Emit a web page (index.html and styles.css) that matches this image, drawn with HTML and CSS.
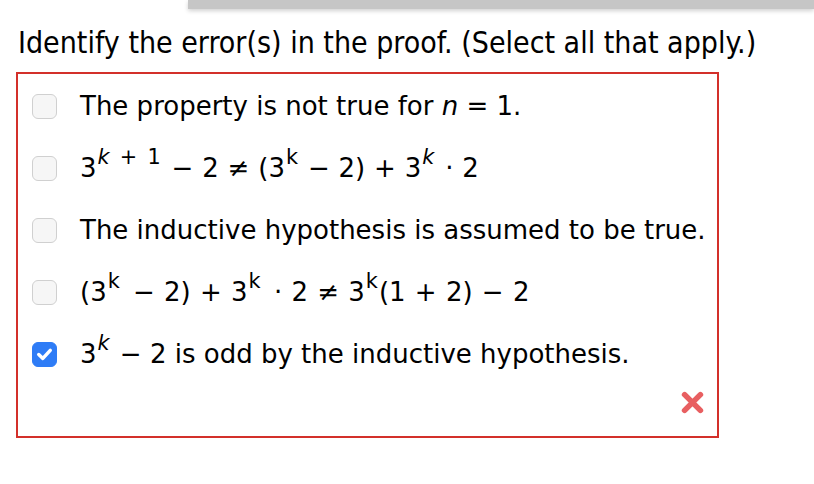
FILE: index.html
```html
<!DOCTYPE html>
<html>
<head>
<meta charset="utf-8">
<link rel="stylesheet" href="styles.css">
</head>
<body>
<div class="topbar"></div>
<p class="title">Identify the error(s) in the proof. (Select all that apply.)</p>
<div class="answer">
  <label class="row">
    <span class="box"></span>
    <span class="txt">The property is not true for <i>n</i> = 1.</span>
  </label>
  <label class="row">
    <span class="box"></span>
    <span class="txt eq-a">3<sup class="it"><i>k</i> <span class="op">+</span> 1</sup> &minus; 2 &ne; (3<sup class="tight">k</sup> &minus; 2) + 3<sup class="it"><i>k</i></sup> &middot; 2</span>
  </label>
  <label class="row">
    <span class="box"></span>
    <span class="txt">The inductive hypothesis is assumed to be true.</span>
  </label>
  <label class="row">
    <span class="box"></span>
    <span class="txt eq-b">(3<sup>k</sup> &minus; 2) + 3<sup>k</sup> &middot; 2 &ne; 3<sup class="tight">k</sup>(1 + 2) &minus; 2</span>
  </label>
  <label class="row">
    <span class="box checked"><svg viewBox="0 0 24 24" width="24" height="24"><path d="M6 12.5 L10.3 16.6 L18 8.2" fill="none" stroke="#fff" stroke-width="3.6" stroke-linecap="round" stroke-linejoin="round"/></svg></span>
    <span class="txt">3<sup class="it"><i>k</i></sup> &minus; 2 is odd by the inductive hypothesis.</span>
  </label>
  <div class="foot">
    <svg class="mark" viewBox="0 0 24 24" width="27" height="27"><path d="M5 5 L19 19 M19 5 L5 19" stroke="#e85f61" stroke-width="5" stroke-linecap="round"/></svg>
  </div>
</div>
</body>
</html>
```
FILE: styles.css
```css
html, body {
  margin: 0;
  padding: 0;
  background: #fff;
}
body {
  width: 814px;
  height: 484px;
  overflow: hidden;
  color: #000;
  font-family: "DejaVu Sans", Verdana, sans-serif;
}
.topbar {
  margin-left: 188px;
  height: 9px;
  background: #c6c6c6;
  box-shadow: 0 2px 4px rgba(0,0,0,0.18);
}
.title {
  margin: 16px 0 0 18px;
  font-family: "DejaVu Sans Condensed", "DejaVu Sans", sans-serif;
  font-size: 30px;
  line-height: 36px;
}
.answer {
  margin: 11px 0 0 16px;
  border: 2px solid #d3302a;
  box-sizing: content-box;
  padding: 12px 0 0 14px;
  width: 685px;
  height: 350px;
  display: flex;
  flex-direction: column;
  gap: 22px;
}
.row {
  display: flex;
  align-items: center;
  height: 40px;
  gap: 23px;
}
.box {
  width: 25px;
  height: 25px;
  box-sizing: border-box;
  border: 1.5px solid #d0d0d0;
  border-radius: 6px;
  background: #f6f6f6;
  flex: none;
}
.box.checked {
  background: #2e7cf6;
  border-color: #2e7cf6;
  display: flex;
  align-items: center;
  justify-content: center;
}
.box.checked svg {
  width: 24px;
  height: 24px;
}
.txt {
  font-size: 26px;
  line-height: 30px;
  white-space: nowrap;
}
.eq-a {
  word-spacing: 0.6px;
}
.eq-b {
  word-spacing: 1px;
}
sup {
  font-size: 0.8em;
  vertical-align: 0.62em;
  line-height: 0;
  margin-left: 1px;
  margin-right: 4px;
}
sup.it {
  margin-right: 2px;
}
sup.tight {
  margin-right: 1px;
}
.op {
  margin: 0 3px;
}
.foot {
  display: flex;
  justify-content: flex-end;
  padding-right: 11px;
  margin-top: -7px;
}
.mark {
  filter: blur(0.5px);
}
```
